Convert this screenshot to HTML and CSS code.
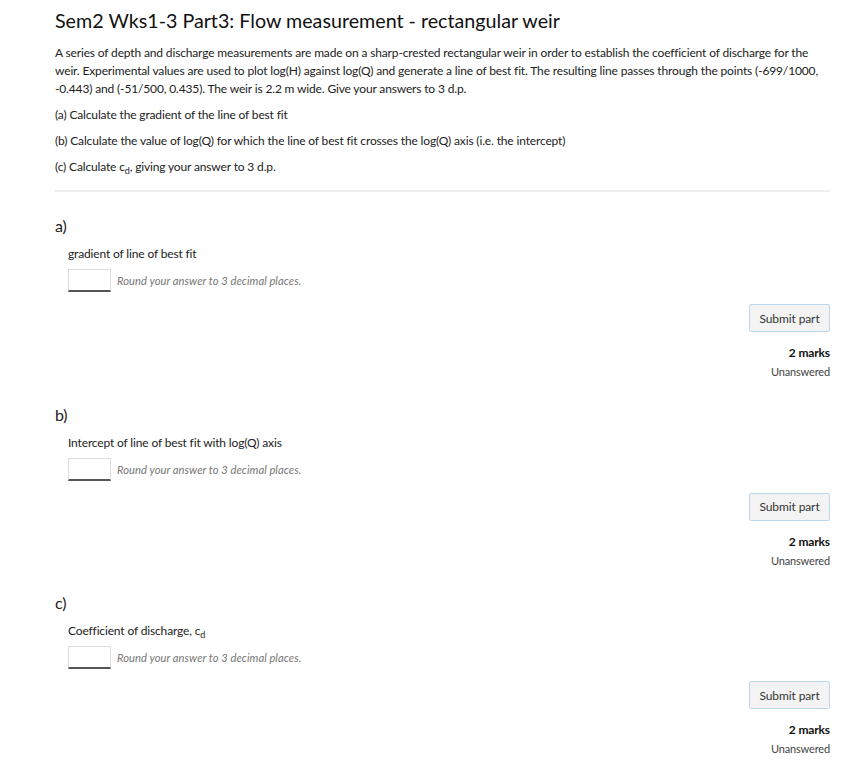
FILE: index.html
```html
<!DOCTYPE html>
<html>
<head>
<meta charset="utf-8">
<link rel="stylesheet" href="styles.css">
</head>
<body>
<div class="page">
  <h1 class="title">Sem2 Wks1-3 Part3: Flow measurement - rectangular weir</h1>
  <div class="statement">
    <p class="intro">A series of depth and discharge measurements are made on a sharp-crested rectangular weir in order to establish the coefficient of discharge for the weir. Experimental values are used to plot log(H) against log(Q) and generate a line of best fit. The resulting line passes through the points (-699/1000, -0.443) and (-51/500, 0.435). The weir is 2.2 m wide. Give your answers to 3 d.p.</p>
    <p class="task">(a) Calculate the gradient of the line of best fit</p>
    <p class="task">(b) Calculate the value of log(Q) for which the line of best fit crosses the log(Q) axis (i.e. the intercept)</p>
    <p class="task">(c) Calculate c<sub>d</sub>, giving your answer to 3 d.p.</p>
  </div>
  <hr class="sep">

  <section class="part">
    <h2 class="part-label">a)</h2>
    <div class="part-body">
      <p class="prompt">gradient of line of best fit</p>
      <div class="answer-row">
        <span class="answer-box"></span>
        <span class="hint">Round your answer to 3 decimal places.</span>
      </div>
    </div>
    <div class="part-footer">
      <button class="submit">Submit part</button>
      <div class="marks">2 marks</div>
      <div class="status">Unanswered</div>
    </div>
  </section>

  <section class="part">
    <h2 class="part-label">b)</h2>
    <div class="part-body">
      <p class="prompt">Intercept of line of best fit with log(Q) axis</p>
      <div class="answer-row">
        <span class="answer-box"></span>
        <span class="hint">Round your answer to 3 decimal places.</span>
      </div>
    </div>
    <div class="part-footer">
      <button class="submit">Submit part</button>
      <div class="marks">2 marks</div>
      <div class="status">Unanswered</div>
    </div>
  </section>

  <section class="part">
    <h2 class="part-label">c)</h2>
    <div class="part-body">
      <p class="prompt">Coefficient of discharge, c<sub>d</sub></p>
      <div class="answer-row">
        <span class="answer-box"></span>
        <span class="hint">Round your answer to 3 decimal places.</span>
      </div>
    </div>
    <div class="part-footer">
      <button class="submit">Submit part</button>
      <div class="marks">2 marks</div>
      <div class="status">Unanswered</div>
    </div>
  </section>
</div>
</body>
</html>
```

FILE: styles.css
```css
html, body {
  margin: 0;
  padding: 0;
  background: #fff;
}
body {
  font-family: "Lato", "Liberation Sans", sans-serif;
  color: #222;
  font-size: 12px;
  letter-spacing: -0.15px;
}
.page {
  padding: 8px 32px 0 55px;
}
.title {
  font-size: 19.7px;
  font-weight: 400;
  margin: 0 0 10px 0;
  line-height: 26px;
  color: #111;
  letter-spacing: 0;
}
.statement p {
  margin: 0 0 8px 0;
  line-height: 18px;
}
.statement .task {
  margin-bottom: 8px;
}
sub {
  font-size: 9px;
  vertical-align: -3px;
  line-height: 0;
}
.sep {
  border: 0;
  border-top: 2px solid #eee;
  margin: 14px 0 0 0;
}
.part {
  display: flex;
  flex-direction: column;
  padding-top: 24px;
  height: 164.5px;
}
.part-label {
  font-size: 16px;
  font-weight: 400;
  margin: 0;
  line-height: 20px;
}
.part-body {
  padding-left: 13px;
}
.prompt {
  margin: 10px 0 7px 0;
  line-height: 16px;
}
.answer-row {
  display: flex;
  align-items: center;
  gap: 6px;
}
.answer-box {
  width: 41px;
  height: 20px;
  border: 1px solid #ddd;
  border-bottom: 2px solid #555;
  background: #fff;
}
.hint {
  font-style: italic;
  color: #777;
  font-size: 11.2px;
  letter-spacing: 0.05px;
}
.part-footer {
  display: flex;
  flex-direction: column;
  align-items: flex-end;
  margin-top: 12px;
}
.submit {
  font-family: inherit;
  font-size: 12px;
  letter-spacing: -0.1px;
  color: #333;
  background: #f3f3f3;
  border: 1px solid #b9d9f1;
  border-radius: 2px;
  width: 81px;
  height: 28px;
  padding: 0;
}
.marks {
  font-weight: 700;
  margin-top: 13px;
  line-height: 16px;
  color: #111;
}
.status {
  font-size: 11px;
  margin-top: 4px;
  color: #444;
  line-height: 14px;
}
```
